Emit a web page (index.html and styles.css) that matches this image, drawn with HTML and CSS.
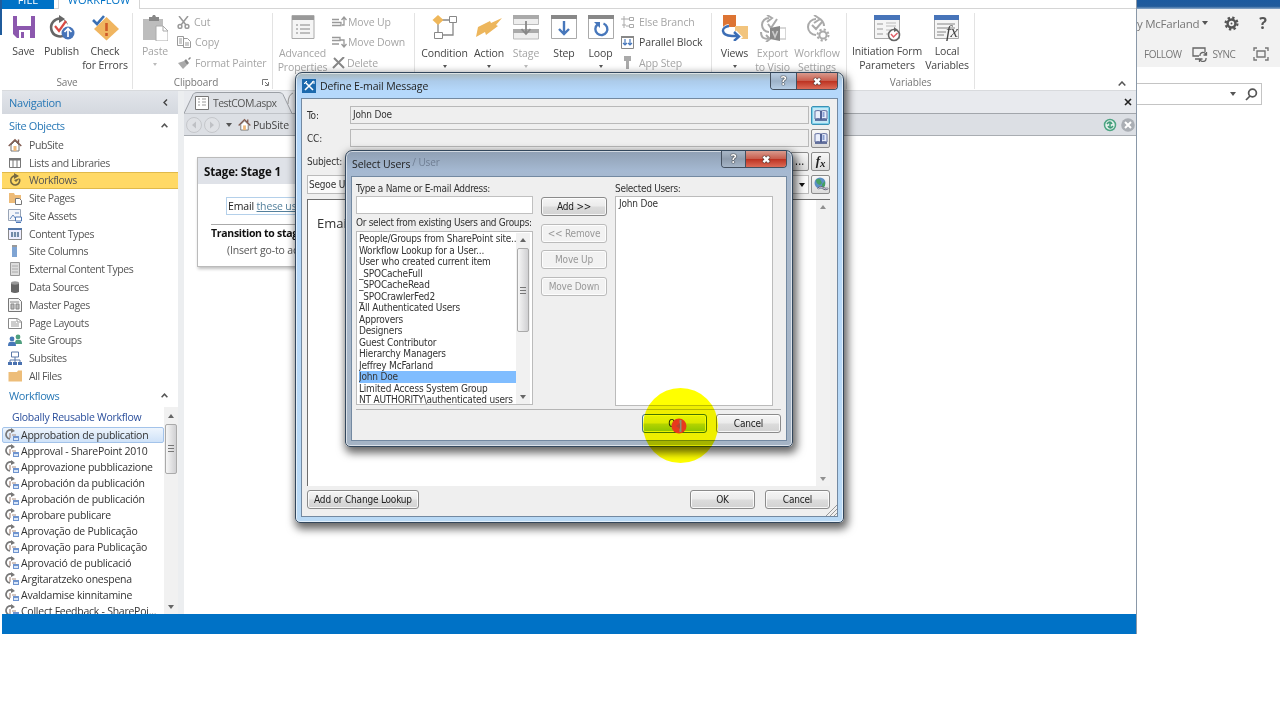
FILE: index.html
```html
<!DOCTYPE html>
<html lang="en">
<head>
    <meta charset="UTF-8">
    <meta name="viewport" content="width=device-width, initial-scale=1.0">
    <title>SharePoint Designer</title>
    <link rel="stylesheet" href="styles.css">
</head>
<body>
    <svg class="defs" width="0" height="0">
        <symbol id="flow" viewBox="0 0 15 14">
            <path d="M8 2.5A4.6 4.6 0 1 0 5 11" fill="none" stroke="#777" stroke-width="1.7"/>
            <path d="M6 0l4 3-4 2" fill="#777"/>
            <path d="M5 5v5M7 7h4" stroke="#a98d80" stroke-width="1.2"/>
            <path d="M8 8h6v5H8z" fill="#6f94cf"/><path d="M9 10h4v2H9z" fill="#dce8f8"/>
        </symbol>
        <symbol id="house" viewBox="0 0 14 14">
            <path d="M3 7v6h8V7L7 3z" fill="#fff" stroke="#777"/>
            <path d="M.7 8L7 1.7 13.3 8M10.5 1.5v3" fill="none" stroke="#805b50" stroke-width="1.4"/>
            <path d="M5.5 8h3v5h-3z" fill="#edb97d"/>
        </symbol>
        <symbol id="book" viewBox="0 0 14 12">
            <path d="M1 2q3-1 6 0v8q-3-1-6 0zM13 2q-3-1-6 0v8q3-1 6 0z" fill="#e9eefb" stroke="#6673a3"/>
            <path d="M1 11h12M7 2v8" stroke="#3e4f86" stroke-width="1.4"/>
            <path d="M9.5 3v5" stroke="#8ba1d4" stroke-width="2"/>
        </symbol>
    </svg>

    <div class="browser">
        <div class="browser-top"></div>
        <div class="browser-user">
            <span>y McFarland</span><i class="tri"></i>
            <svg class="gear" width="15" height="15" viewBox="0 0 16 16"><circle cx="8" cy="8" r="4.2" fill="none" stroke="#555" stroke-width="2.6"/><circle cx="8" cy="8" r="6.3" fill="none" stroke="#555" stroke-width="2.4" stroke-dasharray="2.5 2.45"/><circle cx="8" cy="8" r="1" fill="#555"/></svg>
            <b class="help">?</b>
        </div>
        <div class="browser-actions">
            <span>FOLLOW</span>
            <svg class="sync" width="16" height="15" viewBox="0 0 16 15" fill="none" stroke="#666" stroke-width="1.3"><path d="M7 9H1V1h12v4M3 12h4"/><path d="M8 9a3 3 0 0 1 6-1M14 11a3 3 0 0 1-6 1M14.5 5v3h-3M7.500 15v-3h3"/></svg>
            <span>SYNC</span>
            <svg class="focus" width="16" height="14" viewBox="0 0 16 14" fill="none" stroke="#777" stroke-width="1.4"><path d="M4 4h8v6H4zM1 4V1h3M12 1h3v3M15 10v3h-3M4 13H1v-3"/></svg>
        </div>
        <div class="browser-search">
            <i class="tri"></i>
            <svg width="13" height="13" viewBox="0 0 13 13" fill="none" stroke="#555" stroke-width="1.7"><circle cx="7.500" cy="5" r="3.900"/><path d="M5 8l-4 4"/></svg>
        </div>
    </div>

    <div class="app">
        <div class="tabs">
            <div class="tab-file">FILE</div>
            <div class="tab-workflow">WORKFLOW</div>
        </div>

        <div class="ribbon">
            <div class="group g-save">
                <div class="tools">
                    <div class="big"><svg width="24" height="24" viewBox="0 0 24 24"><path d="M1 1h22v22H5l-4-4z" fill="#8c58ae"/><path d="M5 1h14v10H5zM7 15h11v8H7z" fill="#fff"/><path d="M9 17h3v6H9z" fill="#8c58ae"/></svg><span>Save</span></div>
                    <div class="big"><svg width="28" height="26" viewBox="0 0 28 26"><path d="M13 3.500A9 9 0 1 0 17 20" fill="none" stroke="#666" stroke-width="2.600"/><path d="M11 0l6 4-6 4zM15 4a9 9 0 0 1 5 6" fill="#666"/><path d="M7 11l4 5 7-10" fill="none" stroke="#d94b45" stroke-width="2.200"/><circle cx="20" cy="18" r="6.500" fill="#4674b9"/><path d="M20 22v-8M16.500 17l3.500-3.500 3.500 3.500" stroke="#fff" stroke-width="1.700" fill="none"/></svg><span>Publish</span></div>
                    <div class="big"><svg width="28" height="26" viewBox="0 0 28 26"><path d="M15.500 2L28 14 15.500 25.500 3 14z" fill="#f0b560"/><path d="M15.500 8v8M15.500 18v3" stroke="#cf5a28" stroke-width="2.600"/><path d="M2 5l4 4 7-8" fill="none" stroke="#3a70b5" stroke-width="2.600"/></svg><span>Check<br>for Errors</span></div>
                </div>
                <div class="caption">Save</div>
            </div>

            <div class="group g-clip">
                <div class="tools">
                    <div class="big off"><svg width="26" height="26" viewBox="0 0 26 26"><path d="M1 4h20v21H1z" fill="#bdbdbd"/><path d="M7 2h3l1-2h2l1 2h3v4H7z" fill="#888"/><path d="M14 11h7l5 5v10H14z" fill="#fff" stroke="#aaa"/><path d="M21 11v5h5" fill="none" stroke="#aaa"/></svg><span>Paste</span><i class="tri"></i></div>
                    <div class="list off">
                        <div><svg width="13" height="13" viewBox="0 0 13 13" fill="none" stroke="#999" stroke-width="1.500"><path d="M2 0l7 9M11 0L4 9"/><circle cx="3" cy="10.500" r="1.900"/><circle cx="10" cy="10.500" r="1.900"/></svg><span>Cut</span></div>
                        <div><svg width="14" height="12" viewBox="0 0 14 12" fill="#fff" stroke="#999"><path d="M.5.5h6v9h-6zM6.500 2.500h4l3 3v6h-7z"/><path d="M2 3h3M2 5h3M2 7h3M8 7h4M8 9h4"/></svg><span>Copy</span></div>
                        <div><svg width="14" height="12" viewBox="0 0 14 12"><path d="M1 6l6-2 3 4-4 4z" fill="#aaa"/><path d="M7 4l2-2 3 4-2 2zM11 2l2-2 1 1-2 2z" fill="#888"/></svg><span>Format Painter</span></div>
                    </div>
                </div>
                <div class="caption">Clipboard<svg class="launcher" width="7" height="7" viewBox="0 0 7 7" stroke="#777" fill="none"><path d="M.5 6V.5H6M3 3l3 3M6.500 3v3.500H3"/></svg></div>
            </div>

            <div class="group g-modify">
                <div class="tools">
                    <div class="big off"><svg width="24" height="24" viewBox="0 0 24 24"><path d="M1 .5h22v23H1z" fill="#f5f5f5" stroke="#aaa"/><path d="M1 1h22v4H1z" fill="#999"/><path d="M5 10h2M5 14h2M5 18h2M9 10h10M9 14h10M9 18h10" stroke="#aaa" stroke-width="1.400"/></svg><span>Advanced<br>Properties</span></div>
                    <div class="list off">
                        <div><svg width="15" height="12" viewBox="0 0 15 12" fill="none" stroke="#999"><path d="M0 3.500h7M0 6.500h9v3H0M10 9h2V2M9.500 4L12 1l2.500 3" stroke-width="1.300"/></svg><span>Move Up</span></div>
                        <div><svg width="15" height="12" viewBox="0 0 15 12" fill="none" stroke="#999"><path d="M0 1.500h8v3H0M0 8h7M8 4h4v6M9.500 8l2.500 3 2.500-3" stroke-width="1.300"/></svg><span>Move Down</span></div>
                        <div><svg width="14" height="12" viewBox="0 0 14 12"><path d="M2 1l10 10M12 0L1 11" stroke="#888" stroke-width="2"/></svg><span>Delete</span></div>
                    </div>
                </div>
            </div>

            <div class="group g-insert">
                <div class="tools">
                    <div class="big"><svg width="26" height="26" viewBox="0 0 26 26" fill="none" stroke="#888"><path d="M10 5h7M6 9v9M10 20h11V8" stroke-width="1.300"/><path d="M6 0l5.500 5L6 10 .5 5z" fill="#efb75a" stroke="none"/><path d="M17.500 1.500h7v6h-7zM2.500 17.500h8v6h-8z" fill="#fff"/></svg><span>Condition</span><i class="tri"></i></div>
                    <div class="big"><svg width="26" height="24" viewBox="0 0 26 24"><path d="M26 3L15 8 14 6 2 12 0 22l9-5 1 3 12-9-2-1z" fill="#edb65c"/></svg><span>Action</span><i class="tri"></i></div>
                    <div class="big off"><svg width="26" height="25" viewBox="0 0 26 25"><path d="M.5.500h25v9H.5zM.5 15h25v9H.5z" fill="#eee" stroke="#bbb"/><path d="M0 0h26v4H0zM0 14h26v4H0z" fill="#aaa"/><path d="M13 6v13M8.500 14l4.500 5 4.500-5" fill="none" stroke="#888" stroke-width="1.800"/></svg><span>Stage</span><i class="tri"></i></div>
                    <div class="big"><svg width="26" height="25" viewBox="0 0 26 25"><path d="M.5.500h25v23H.5z" fill="#fff" stroke="#aaa"/><path d="M0 0h26v4H0z" fill="#888"/><path d="M13 6v13M8 14l5 5 5-5" fill="none" stroke="#4777bb" stroke-width="2.400"/></svg><span>Step</span></div>
                    <div class="big"><svg width="26" height="25" viewBox="0 0 26 25"><path d="M.5.500h25v23H.5z" fill="#fff" stroke="#aaa"/><path d="M0 0h26v4H0z" fill="#888"/><path d="M15.500 8.500a6 6 0 1 1-6 1" fill="none" stroke="#4777bb" stroke-width="2.400"/><path d="M6 7h6v6z" fill="#4777bb"/></svg><span>Loop</span><i class="tri"></i></div>
                    <div class="list">
                        <div class="off"><svg width="13" height="13" viewBox="0 0 13 13" fill="none" stroke="#aaa"><path d="M3 0v12M0 3h6M1 9h4M8.500 1.500h4v3h-4zM8.500 8.500h4v3h-4zM6 3h2M5 10h3"/></svg><span>Else Branch</span></div>
                        <div><svg width="13" height="13" viewBox="0 0 13 13" fill="none"><path d="M.5.500h12v12H.5z" fill="#fff" stroke="#888"/><path d="M0 0h13v2H0z" fill="#888"/><path d="M4 3v6M2 7l2 2 2-2M9 3v6M7 7l2 2 2-2" stroke="#4777bb" stroke-width="1.200"/></svg><span>Parallel Block</span></div>
                        <div class="off"><svg width="13" height="13" viewBox="0 0 13 13"><path d="M3 0h7v5H8v8H5V5H3z" fill="#aaa"/></svg><span>App Step</span></div>
                    </div>
                </div>
            </div>

            <div class="group g-manage">
                <div class="tools">
                    <div class="big"><svg width="27" height="26" viewBox="0 0 27 26"><path d="M2 0h13v12H2z" fill="#dd7433"/><path d="M14 11h13v13H14z" fill="#f2c47d"/><path d="M8 11c-7 1-9 10 3 11h6M14 17l5 5-5 4" fill="none" stroke="#fff" stroke-width="4"/><path d="M8 11c-8 1-9 9 3 10h6M13 17l5 4.500-5 4.500" fill="none" stroke="#3c6eb5" stroke-width="2.400"/></svg><span>Views</span><i class="tri"></i></div>
                    <div class="big off"><svg width="27" height="27" viewBox="0 0 27 27"><path d="M10 3a7 7 0 0 0 0 14M8 0l5 3-5 4M2 17c0 6 3 7 8 7M7 20l4 4-4 3M9 9l3 4 6-9" fill="none" stroke="#aaa" stroke-width="2"/><path d="M11 13l10-2v15l-10-2z" fill="#888"/><path d="M21 13h6v11h-6M13.500 16l2.500 6 2.500-6" stroke="#ccc" fill="none" stroke-width="1.600"/></svg><span>Export<br>to Visio</span></div>
                    <div class="big off"><svg width="27" height="27" viewBox="0 0 27 27" fill="none" stroke="#aaa" stroke-width="2"><path d="M12 4A8 8 0 1 0 12 20M10 0l6 4-6 4M16 4c3 2 4 4 4 7M8 10l4 4 6-7"/><circle cx="19" cy="20" r="3.600"/><circle cx="19" cy="20" r="5.500" stroke-dasharray="2.200 2.120"/></svg><span>Workflow<br>Settings</span></div>
                </div>
            </div>

            <div class="group g-vars">
                <div class="tools">
                    <div class="big"><svg width="27" height="27" viewBox="0 0 27 27"><path d="M.5.500h25v23H.5z" fill="#f5f5f5" stroke="#aaa"/><path d="M0 0h26v5H0z" fill="#4774b9"/><path d="M3 9h6M3 14h6M3 19h6" stroke="#999"/><path d="M12 8h10M12 11h10M12 15h8M12 19h3" stroke="#bbb"/><circle cx="20" cy="20" r="5.500" fill="#fff" stroke="#666" stroke-width="1.600"/><path d="M20 12l4 3-4 2" fill="#666"/><path d="M17 19l2.500 3 4-4" fill="none" stroke="#e2626b" stroke-width="1.500"/></svg><span>Initiation Form<br>Parameters</span></div>
                    <div class="big"><svg width="26" height="27" viewBox="0 0 26 27"><path d="M.5.500h24v23H.5z" fill="#f5f5f5" stroke="#aaa"/><path d="M0 0h25v5H0z" fill="#4774b9"/><path d="M3 9h18M3 13h18M3 17h9M3 20h7" stroke="#aaa" stroke-width="1.300"/><text x="12" y="22" class="fx-text">fx</text></svg><span>Local<br>Variables</span></div>
                </div>
                <div class="caption">Variables</div>
            </div>
            <svg class="collapse" width="8" height="5" viewBox="0 0 8 5"><path d="M.7 4.500L4 1l3.300 3.500" fill="none" stroke="#555" stroke-width="1.500"/></svg>
        </div>

        <div class="main">
            <div class="nav">
                <div class="nav-title"><span>Navigation</span><svg width="5" height="7" viewBox="0 0 5 7"><path d="M4 .5l-3 3 3 3" fill="none" stroke="#444" stroke-width="1.400"/></svg></div>
                <div class="nav-head"><span>Site Objects</span><svg width="7" height="5" viewBox="0 0 8 5"><path d="M.7 4.500L4 1l3.300 3.500" fill="none" stroke="#555" stroke-width="1.700"/></svg></div>
                <ul class="objects">
                    <li><svg><use href="#house"/></svg>PubSite</li>
                    <li><svg viewBox="0 0 14 14"><path d="M1.500 2.500h11v9h-11zM5 3v8M9 3v8" fill="#fff" stroke="#777"/><path d="M1 2h12v2.500H1z" fill="#777"/></svg>Lists and Libraries</li>
                    <li class="current"><svg viewBox="0 0 14 14"><path d="M8 3a4.500 4.500 0 1 0 3.500 3" fill="none" stroke="#776a43" stroke-width="1.600"/><path d="M6 0l5 3-5 3zM6 7l2 2 4-4" fill="#776a43"/></svg>Workflows</li>
                    <li><svg viewBox="0 0 14 14"><path d="M1 2h5l1 2h6v8H1z" fill="#edbb78"/><path d="M7.500 7.500h4l2 2v4h-6z" fill="#fff" stroke="#777"/></svg>Site Pages</li>
                    <li><svg viewBox="0 0 14 14"><path d="M.5.500h12v11H.5z" fill="#f4f6fa" stroke="#98a4b6"/><path d="M2 10l3-4 3 4M7 4h4" stroke="#6789bd" fill="none"/><path d="M7.500 8h6v4h-6zM8 13.500h5" fill="#fff" stroke="#4d77b5"/></svg>Site Assets</li>
                    <li><svg viewBox="0 0 14 14"><path d="M.5 1.500h13v11H.5z" fill="#eef" stroke="#888"/><path d="M0 1h14v2H0z" fill="#5276a8"/><path d="M3 5h8v5H3z" fill="#738aa9"/><path d="M5.500 5v5M8.500 5v5" stroke="#dce4ef"/></svg>Content Types</li>
                    <li><svg viewBox="0 0 14 14"><path d="M4 1h5v12H4z" fill="#7fa4d3"/><path d="M4 1h5v2H4z" fill="#999"/></svg>Site Columns</li>
                    <li><svg viewBox="0 0 14 14"><path d="M2.500.500h9v13h-9z" fill="#ddd" stroke="#999"/><path d="M4 4h6M4 7h6M4 10h6" stroke="#aaa"/></svg>External Content Types</li>
                    <li><svg viewBox="0 0 14 14"><path d="M3 3h8v9q-4 2-8 0z" fill="#666"/><ellipse cx="7" cy="3" rx="4" ry="1.700" fill="#999"/></svg>Data Sources</li>
                    <li><svg viewBox="0 0 14 14"><path d="M.5.500h10l3 3v10H.5z" fill="#f4f4f4" stroke="#777"/><path d="M2 4h9M3 6h3v5H3zM8 6h3v5H8z" fill="#bbb" stroke="#888"/></svg>Master Pages</li>
                    <li><svg viewBox="0 0 14 14"><path d="M.5 2.500h9l4 3v7H.5z" fill="#fff" stroke="#888"/><path d="M9 3v3h4M3 6h5M3 8h8M3 10h8" fill="none" stroke="#999"/></svg>Page Layouts</li>
                    <li><svg viewBox="0 0 14 14"><circle cx="10" cy="4" r="2.400" fill="#4f9f7e"/><path d="M7 11q0-5 3-4 4-1 4 4z" fill="#4f9f7e"/><circle cx="4" cy="6" r="2.400" fill="#4777b8"/><path d="M0 13q0-5 4-4 4-1 4 4z" fill="#4777b8"/></svg>Site Groups</li>
                    <li><svg viewBox="0 0 14 14"><path d="M3.500 1h7v5h-7zM7 6v3M2 12V9h10v3M7 9v3" fill="#fff" stroke="#5b79a8"/><path d="M0 11h4v3H0zM5 11h4v3H5zM10 11h4v3h-4z" fill="#4971b0"/></svg>Subsites</li>
                    <li><svg viewBox="0 0 14 14"><path d="M.5 3H9l1-1.500h4V12.500H.5z" fill="#edbd79"/></svg>All Files</li>
                </ul>
                <div class="nav-head"><span>Workflows</span><svg width="7" height="5" viewBox="0 0 8 5"><path d="M.7 4.500L4 1l3.300 3.500" fill="none" stroke="#555" stroke-width="1.700"/></svg></div>
                <div class="tree">
                    <ul>
                        <li class="tree-head">Globally Reusable Workflow</li>
                        <li class="picked"><svg><use href="#flow"/></svg>Approbation de publication</li>
                        <li><svg><use href="#flow"/></svg>Approval - SharePoint 2010</li>
                        <li><svg><use href="#flow"/></svg>Approvazione pubblicazione</li>
                        <li><svg><use href="#flow"/></svg>Aprobación da publicación</li>
                        <li><svg><use href="#flow"/></svg>Aprobación de publicación</li>
                        <li><svg><use href="#flow"/></svg>Aprobare publicare</li>
                        <li><svg><use href="#flow"/></svg>Aprovação de Publicação</li>
                        <li><svg><use href="#flow"/></svg>Aprovação para Publicação</li>
                        <li><svg><use href="#flow"/></svg>Aprovació de publicació</li>
                        <li><svg><use href="#flow"/></svg>Argitaratzeko onespena</li>
                        <li><svg><use href="#flow"/></svg>Avaldamise kinnitamine</li>
                        <li><svg><use href="#flow"/></svg>Collect Feedback - SharePoi...</li>
                    </ul>
                    <div class="scroll tree-scroll"><i class="up"></i><div class="thumb"></div><i class="down"></i></div>
                </div>
            </div>

            <div class="content">
                <div class="doc-tabs">
                    <svg class="tab-shape" width="112" height="22" viewBox="0 0 112 22"><path d="M0 21.500L9 2.500Q10 .5 13 .5H95Q98 .5 99 2.500L108 21.500" fill="#dde0e5" stroke="#9b9fa5"/><path d="M104 12q0-9 5-11" fill="none" stroke="#999"/></svg>
                    <div class="doc-tab"><svg width="14" height="14" viewBox="0 0 14 14"><path d="M.5.500h13v13H.5z" fill="#fff" stroke="#777"/><path d="M3 3h2M7 3h4M3 6h2M7 6h4M3 9h2M7 9h4" stroke="#999"/></svg><span>TestCOM.aspx</span></div>
                    <svg class="doc-close" width="8" height="8" viewBox="0 0 8 8"><path d="M1 1l6 6M7 1L1 7" stroke="#222" stroke-width="1.600"/></svg>
                </div>
                <div class="crumbs">
                    <svg width="36" height="18" viewBox="0 0 36 18"><circle cx="9" cy="9" r="7.500" fill="#dfe1e5" stroke="#c5c7cb"/><circle cx="27" cy="9" r="7.500" fill="#dfe1e5" stroke="#c5c7cb"/><path d="M11 5.500L7 9l4 3.500zM25 5.500L29 9l-4 3.500z" fill="#bfc1c5"/></svg>
                    <i class="tri"></i>
                    <svg class="crumb-house" width="13" height="13"><use href="#house"/></svg>
                    <span>PubSite</span>
                    <svg class="crumb-tools" width="32" height="14" viewBox="0 0 32 14"><circle cx="7" cy="7" r="5.500" fill="#e4f0eb" stroke="#4da583" stroke-width="1.500"/><path d="M4 6q3-4 5 0M10 8q-3 4-5 0M7 4v6" stroke="#3e9b77" stroke-width="1.500" fill="none"/><circle cx="25" cy="7" r="6.800" fill="#aaaeb4"/><path d="M22 4l6 6M28 4l-6 6" stroke="#fff" stroke-width="2"/></svg>
                </div>
                <div class="canvas">
                    <div class="stage">
                        <div class="stage-head">Stage: Stage 1</div>
                        <div class="stage-body">
                            <div class="step">Email <u>these users</u></div>
                            <div class="transition">Transition to stage</div>
                            <div class="insert">(Insert go-to actions)</div>
                        </div>
                    </div>
                </div>
            </div>
        </div>
        <div class="status"></div>
    </div>

    <div class="dialog email-dialog">
        <div class="titlebar">
            <svg width="14" height="14" viewBox="0 0 14 14"><path d="M0 0h14v14H0z" fill="#1c69ad"/><path d="M3 3l8 8M11 3l-8 8" stroke="#fff" stroke-width="1.600"/><path d="M2 5l3-3M10 3l2-1v3" stroke="#fff" fill="none"/></svg>
            <span>Define E-mail Message</span>
            <div class="win-buttons"><div class="win-help">?</div><div class="win-close">✖</div></div>
        </div>
        <div class="client">
            <div class="field"><label>To:</label><div class="box">John Doe</div><div class="icon-btn hot"><svg width="14" height="12"><use href="#book"/></svg></div></div>
            <div class="field"><label>CC:</label><div class="box"></div><div class="icon-btn"><svg width="14" height="12"><use href="#book"/></svg></div></div>
            <div class="field"><label>Subject:</label><div class="box"></div><div class="icon-btn dots">...</div><div class="icon-btn fx">f<small>x</small></div></div>
            <div class="format">
                <div class="font-box">Segoe UI</div>
                <i class="tri"></i>
                <div class="icon-btn"><svg width="16" height="15" viewBox="0 0 16 15"><circle cx="7" cy="6" r="5.500" fill="#5b8fc4"/><path d="M3 3q4-3 5 1 2 2-1 4-4-1-4-5zM9 7l3-3v5l-3 2z" fill="#45a064"/><path d="M5 12q2-3 5-1t5 0" fill="none" stroke="#667" stroke-width="2.200"/><path d="M5 12q2-3 5-1t5 0" fill="none" stroke="#dde" stroke-width=".8"/></svg></div>
            </div>
            <div class="editor"><p>Email</p><div class="scroll faint"><i class="up"></i><i class="down"></i></div></div>
            <div class="buttons">
                <div class="btn lookup">Add or Change Lookup</div>
                <div class="btn">OK</div>
                <div class="btn">Cancel</div>
            </div>
            <svg class="grip" width="12" height="12" viewBox="0 0 12 12"><path d="M1 12L12 1M5 12l7-7M9 12l3-3" stroke="#999"/></svg>
        </div>
    </div>

    <div class="dialog users-dialog">
        <div class="titlebar">
            <span>Select Users</span><span class="behind">/ User</span>
            <div class="win-buttons"><div class="win-help">?</div><div class="win-close">✖</div></div>
        </div>
        <div class="client">
            <div class="pick">
                <div class="pick-left">
                    <div class="label">Type a Name or E-mail Address:</div>
                    <div class="name-input"></div>
                    <div class="label second">Or select from existing Users and Groups:</div>
                    <div class="listbox">
                        <ul>
                            <li>People/Groups from SharePoint site...</li>
                            <li>Workflow Lookup for a User...</li>
                            <li>User who created current item</li>
                            <li>_SPOCacheFull</li>
                            <li>_SPOCacheRead</li>
                            <li>_SPOCrawlerFed2</li>
                            <li>All Authenticated Users</li>
                            <li>Approvers</li>
                            <li>Designers</li>
                            <li>Guest Contributor</li>
                            <li>Hierarchy Managers</li>
                            <li>Jeffrey McFarland</li>
                            <li class="chosen">John Doe</li>
                            <li>Limited Access System Group</li>
                            <li>NT AUTHORITY\authenticated users</li>
                        </ul>
                        <div class="scroll list-scroll"><i class="up"></i><div class="thumb"></div><i class="down"></i></div>
                    </div>
                </div>
                <div class="pick-mid">
                    <div class="btn">Add &gt;&gt;</div>
                    <div class="btn disabled">&lt;&lt; Remove</div>
                    <div class="btn disabled">Move Up</div>
                    <div class="btn disabled">Move Down</div>
                </div>
                <div class="pick-right">
                    <div class="label">Selected Users:</div>
                    <div class="selected">John Doe</div>
                </div>
            </div>
            <div class="buttons">
                <div class="btn default">OK</div>
                <div class="btn">Cancel</div>
            </div>
        </div>
    </div>

    <div class="click-halo"></div>
    <svg class="click-dot" width="16" height="16" viewBox="0 0 16 16"><circle cx="8" cy="8" r="7.500" fill="#e8391c"/><path d="M9.500 2v12" stroke="#8f8d75" stroke-width="2"/><path d="M5 8l4-3v6z" fill="#b8442e"/></svg>
</body>
</html>
```
FILE: styles.css
```css
* {
    margin: 0;
    padding: 0;
    box-sizing: border-box;
}
body {
    position: relative;
    width: 1280px;
    height: 720px;
    overflow: hidden;
    background: #fff;
    font-family: "Open Sans", "Noto Sans", sans-serif;
    font-size: 10.5px;
    color: #555;
}
ul {
    list-style: none;
}
svg {
    display: block;
    flex: none;
}
.defs {
    position: absolute;
}
.tri {
    width: 0;
    height: 0;
    border: 3px solid transparent;
    border-top: 4px solid #555;
    border-bottom: none;
}

/* page behind the editor */
.browser {
    height: 720px;
    padding-left: 1137px;
    background: linear-gradient(90deg, #1f5b9c 2px, transparent 2px) 0 0 / 100% 35px no-repeat;
}
.browser-top {
    height: 9px;
    background: linear-gradient(#1c5a9f, #215b9b 70%, #8da9c8);
}
.browser-user {
    display: flex;
    align-items: center;
    height: 28px;
    background: #f2f2f2;
    font-size: 11.5px;
    letter-spacing: -0.25px;
    color: #777;
}
.browser-user .tri {
    margin-left: 3px;
}
.gear {
    margin-left: 16px;
}
.help {
    margin-left: 20px;
    font-size: 16px;
    color: #555;
}
.browser-actions {
    display: flex;
    align-items: center;
    height: 30px;
    padding: 4px 0 0 7px;
    background: #f2f2f2;
    font-size: 10px;
    letter-spacing: -0.5px;
    color: #777;
}
.sync {
    margin: 0 4px 0 11px;
}
.focus {
    margin-left: 18px;
}
.browser-search {
    display: flex;
    align-items: center;
    width: 125px;
    height: 22px;
    margin-top: 16px;
    padding-left: 93px;
    gap: 9px;
    border: 1px solid #c4c4c4;
    border-left: none;
}

/* designer window */
.app {
    position: absolute;
    left: 2px;
    top: 0;
    width: 1135px;
    height: 634px;
    display: flex;
    flex-direction: column;
    background: #fff;
    border-right: 1px solid #8a98a8;
}
.tabs {
    display: flex;
    height: 9px;
    border-bottom: 1px solid #d5d5d5;
    font-size: 11px;
}
.tabs div {
    height: 9px;
    overflow: hidden;
}
.tab-file {
    width: 52px;
    margin-right: 4px;
    background: #0072c6;
    color: #fff;
    text-align: center;
    line-height: 0;
}
.tab-workflow {
    width: 82px;
    background: #fff;
    border: solid #d5d5d5;
    border-width: 0 1px;
    color: #0072c6;
    text-align: center;
    line-height: 0;
}
.ribbon {
    display: flex;
    height: 82px;
    padding-top: 4px;
    border-bottom: 1px solid #d8dadd;
    letter-spacing: -0.12px;
}
.group {
    display: flex;
    flex-direction: column;
    border-right: 1px solid #e3e3e3;
    height: 76px;
}
.g-save { width: 131px; }
.g-clip { width: 140px; }
.g-modify { width: 142px; }
.g-insert { width: 297px; }
.g-manage { width: 135px; }
.g-vars { width: 128px; }
.tools {
    display: grid;
    height: 65px;
}
.g-save .tools { grid-template-columns: 43px 33px 54px; }
.g-clip .tools { grid-template-columns: 44px 1fr; }
.g-modify .tools { grid-template-columns: 59px 1fr; }
.g-insert .tools { grid-template-columns: 59px 30px 44px 32px 41px 1fr; }
.g-manage .tools { grid-template-columns: 45px 31px 58px; }
.g-vars .tools { grid-template-columns: 80px 40px; }
.big {
    display: flex;
    flex-direction: column;
    align-items: center;
    white-space: nowrap;
    text-align: center;
    line-height: 14px;
    padding-top: 2px;
    color: #444;
}
.big svg {
    margin-bottom: auto;
}
.big span {
    flex: none;
    height: 32px;
}
.big .tri {
    margin: -13px 0 10px;
    border-width: 3px 2.5px 0;
}
.off, .off span {
    color: #a5a5a5;
}
.off .tri {
    border-top-color: #bbb;
}
.list {
    white-space: nowrap;
    color: #444;
    margin-top: -1px;
}
.list div {
    display: flex;
    align-items: center;
    gap: 4px;
    height: 20.3px;
}
.g-modify .list div {
    gap: 1px;
}
.g-insert .list div {
    gap: 5px;
}
.caption {
    position: relative;
    text-align: center;
    line-height: 13px;
    color: #777;
    font-size: 10px;
}
.g-clip .caption {
    padding-right: 13px;
}
.launcher {
    position: absolute;
    right: 3px;
    top: 3px;
}
.fx-text {
    font: italic 17px "Liberation Serif", serif;
    fill: #444;
}
.collapse {
    align-self: flex-end;
    margin: 0 10px 4px auto;
}

.main {
    display: flex;
    flex: 1;
    min-height: 0;
}
.nav {
    display: flex;
    flex-direction: column;
    width: 182px;
    border-right: 6px solid #eceef0;
}
.nav-title, .nav-head {
    display: flex;
    align-items: center;
    justify-content: space-between;
    flex: none;
    padding: 0 10px 0 7px;
    color: #2878b6;
    font-size: 11px;
    letter-spacing: -0.4px;
}
.nav-title {
    height: 23px;
    letter-spacing: -0.25px;
    background: linear-gradient(#e2e5ea, #d4d8df);
}
.nav-head {
    height: 22px;
}
.objects {
    flex: none;
    letter-spacing: -0.4px;
}
.objects li {
    display: flex;
    align-items: center;
    gap: 7px;
    height: 17.77px;
    padding-left: 6px;
}
.objects svg {
    width: 14px;
    height: 14px;
}
.objects .current {
    background: #ffd966;
    border: solid #e0b94a;
    border-width: 1px 0;
}
.tree {
    display: flex;
    flex: 1;
    min-height: 0;
    letter-spacing: -0.25px;
}
.tree ul {
    width: 162px;
    overflow: hidden;
    white-space: nowrap;
}
.tree li {
    display: flex;
    align-items: center;
    height: 16px;
    padding-left: 3px;
    gap: 1px;
    color: #333;
}
.tree svg {
    width: 15px;
    height: 14px;
}
.tree .tree-head {
    height: 20px;
    padding-left: 10px;
    color: #2b4f9c;
}
.tree .picked {
    background: linear-gradient(#eef5fd, #cfe2f8);
    border: 1px solid #a3c3ea;
    border-radius: 2px;
    padding-left: 2px;
}

/* scrollbars */
.scroll {
    display: flex;
    flex-direction: column;
    align-items: center;
    flex: none;
    width: 14px;
    background: #f1f1f1;
}
.scroll .up, .scroll .down {
    border: 3px solid transparent;
    border-top: none;
    border-bottom: 4px solid #666;
    margin-top: 5px;
}
.scroll .down {
    border-bottom: none;
    border-top: 4px solid #666;
    margin: auto 0 5px;
}
.thumb {
    width: 12px;
    border: 1px solid #aaa;
    border-radius: 2px;
    background:
        repeating-linear-gradient(#777 0 1px, transparent 1px 3px) center / 6px 7px no-repeat,
        linear-gradient(90deg, #f6f6f6, #d0d0d2);
}
.tree-scroll .up {
    margin-top: 7px;
}
.tree-scroll .thumb {
    height: 50px;
    margin-top: 6px;
}
.list-scroll .thumb {
    height: 84px;
    margin-top: 6px;
}
.faint i {
    opacity: 0.7;
}

.content {
    flex: 1;
    min-width: 0;
}
.doc-tabs {
    display: flex;
    align-items: center;
    position: relative;
    height: 23px;
    background: #e8eaee;
    border-bottom: 1px solid #a2a6ab;
}
.tab-shape {
    position: absolute;
    left: 0;
    top: 1px;
}
.doc-tab {
    position: relative;
    display: flex;
    align-items: center;
    gap: 4px;
    padding: 1px 0 0 11px;
    letter-spacing: -0.55px;
    color: #555;
}
.doc-close {
    margin: 0 4px 0 auto;
}
.crumbs {
    display: flex;
    align-items: center;
    height: 22px;
    padding-left: 1px;
    background: #dcdfe4;
    border-bottom: 1px solid #a9adb2;
    letter-spacing: -0.2px;
    color: #444;
}
.crumbs .tri {
    margin: 0 6px 0 5px;
}
.crumb-house {
    margin-right: 2px;
}
.crumb-tools {
    margin: 0 1px 0 auto;
}
.canvas {
    padding: 21px 13px;
}
.stage {
    width: 200px;
    height: 110px;
    border: 1px solid #bbb;
    box-shadow: 1px 2px 3px rgba(0, 0, 0, 0.25);
    white-space: nowrap;
    overflow: hidden;
    letter-spacing: -0.15px;
}
.stage-head {
    height: 26px;
    padding-left: 6px;
    line-height: 28px;
    background: #dfe2e8;
    font-size: 11.5px;
    font-weight: bold;
    color: #111;
}
.stage-body {
    padding: 13px 0 0 13px;
}
.step {
    height: 18px;
    margin-left: 15px;
    padding-left: 1px;
    border: 1px solid #b4d0ea;
    line-height: 16px;
    color: #222;
}
.step u {
    color: #54809c;
}
.transition {
    margin-top: 9px;
    border-top: 1px solid #aaa;
    line-height: 17px;
    font-weight: bold;
    letter-spacing: -0.3px;
    color: #111;
}
.insert {
    padding-left: 16px;
    line-height: 16px;
}
.status {
    height: 20px;
    flex: none;
    background: #0072c6;
}

/* dialogs */
.dialog {
    position: absolute;
    display: flex;
    flex-direction: column;
    padding: 0 5px 5px;
    border: 1.5px solid #33475c;
    border-radius: 7px 7px 5px 5px;
    background: linear-gradient(#a9b7b8, #accbea 8px, #b5d8fb 18px, #b9d9f5);
    box-shadow: inset 0 0 0 1px rgba(255, 255, 255, 0.6), 2px 4px 9px 2px rgba(0, 0, 0, 0.6);
    font-family: "DejaVu Sans Condensed", "DejaVu Sans", sans-serif;
    font-size: 10px;
    letter-spacing: -0.2px;
    color: #333;
}
.email-dialog {
    left: 295px;
    top: 72px;
    width: 549px;
    height: 451px;
}
.users-dialog {
    left: 345px;
    top: 150px;
    width: 448px;
    height: 297px;
    background: linear-gradient(#8f9fb3, #a5b9d2 20px, #aab9cc 40px, #a5b4c5);
}
.titlebar {
    display: flex;
    align-items: center;
    flex: none;
    height: 25px;
    gap: 4px;
    padding-left: 1px;
    font-size: 10.5px;
    font-family: "Open Sans", sans-serif;
    letter-spacing: -0.1px;
    color: #222;
}
.behind {
    margin: -3px 0 0 -2px;
    color: #6f7e93;
    font-size: 10px;
}
.win-buttons {
    display: flex;
    align-self: flex-start;
    width: 68px;
    height: 17px;
    margin-left: auto;
    border: 1px solid #44505f;
    border-top: none;
    border-radius: 0 0 4px 4px;
    overflow: hidden;
    color: #fff;
    font-size: 12px;
    font-weight: bold;
    line-height: 16px;
    text-align: center;
    text-shadow: 0 0 1px #222, 0 0 1px #222, 0 0 1px #222;
}
.win-help {
    width: 26px;
    background: linear-gradient(#bccee1, #9db2c8 50%, #b6cde4);
    border-right: 1px solid #44505f;
}
.win-close {
    flex: 1;
    font-size: 10px;
    background: linear-gradient(#d99a8d, #c95e4e 48%, #bd3322 52%, #dc6b57);
}
.users-dialog .win-buttons {
    width: 66px;
}
.users-dialog .win-help {
    width: 24px;
    background: linear-gradient(#a9b7c7, #8e9cad 50%, #a5b4c6);
}
.client {
    position: relative;
    flex: 1;
    min-height: 0;
    display: flex;
    flex-direction: column;
    background: #efefef;
    border: 1px solid #7389a1;
}
.email-dialog .client {
    padding: 6.5px 7px 0 5px;
}
.field {
    display: flex;
    align-items: center;
    flex: none;
    height: 19px;
    margin-bottom: 4.2px;
}
.field label {
    width: 43px;
    flex: none;
}
.box {
    flex: 1;
    height: 18px;
    padding-left: 2px;
    border: 1px solid #b9b9b9;
    line-height: 15px;
}
.icon-btn {
    display: flex;
    align-items: center;
    justify-content: center;
    width: 19px;
    height: 19px;
    margin-left: 2px;
    flex: none;
    border: 1px solid #8b8b8b;
    border-radius: 2px;
    background: linear-gradient(#f7f7f7, #dcdcdc);
}
.hot {
    border-color: #3a91b5;
    background: #c5e8f6;
    box-shadow: inset 0 0 0 1px #7fd0ea;
}
.dots {
    font-size: 12px;
    color: #111;
}
.fx {
    font: italic bold 13px "Liberation Serif", serif;
    color: #222;
}
.fx small {
    padding-top: 3px;
}
.format {
    display: flex;
    align-items: center;
    flex: none;
    height: 19px;
    margin-bottom: 4.5px;
}
.format .tri {
    margin: 0 4px 0 -10px;
    border-top-color: #111;
}
.font-box {
    flex: 1;
    height: 19px;
    padding-left: 1px;
    border: 1px solid #bbb;
    background: #fafafa;
    line-height: 17px;
}
.editor {
    display: flex;
    flex: none;
    height: 287px;
    background: #fff;
    border: solid #6d6d6d;
    border-width: 1.5px 0 0 1.5px;
}
.editor p {
    flex: 1;
    padding: 14px 0 0 9px;
    font-family: "Open Sans", sans-serif;
    font-size: 13px;
    letter-spacing: 0;
}
.buttons {
    display: flex;
    gap: 10px;
}
.email-dialog .buttons {
    padding-top: 4px;
}
.btn {
    width: 65px;
    height: 19px;
    border: 1px solid #8b8b8b;
    border-radius: 3px;
    background: linear-gradient(#f5f5f5, #ebebeb 48%, #dcdcdc 52%, #d2d2d2);
    box-shadow: inset 0 0 0 1px rgba(255, 255, 255, 0.8);
    line-height: 17px;
    text-align: center;
    white-space: nowrap;
    color: #222;
}
.lookup {
    width: 112px;
    margin-right: auto;
}
.disabled {
    color: #999;
    background: #f2f2f2;
    border-color: #bbb;
}
.grip {
    position: absolute;
    right: 0;
    bottom: 0;
}
.users-dialog .client {
    padding: 0 5px 0 4px;
}
.pick {
    display: flex;
    height: 233px;
    border-bottom: 1px solid #b5b5b5;
}
.label {
    height: 19px;
    padding-top: 6px;
    line-height: 12px;
    white-space: nowrap;
    letter-spacing: -0.3px;
}
.pick-left {
    width: 177px;
}
.name-input {
    height: 18px;
    background: #fff;
    border: 1px solid #c0c0c0;
}
.label.second {
    height: 17px;
    padding-top: 3px;
}
.listbox {
    display: flex;
    height: 174px;
    padding: 1px 2px 0 2px;
    background: #fff;
    border: 1px solid #bbb;
}
.listbox ul {
    flex: 1;
    min-width: 0;
    overflow: hidden;
    white-space: nowrap;
}
.listbox li {
    height: 11.53px;
    line-height: 11.5px;
}
.listbox .chosen {
    background: #80bdff;
}
.pick-mid {
    display: flex;
    flex-direction: column;
    gap: 7.5px;
    width: 66px;
    margin: 20px 8px 0 8px;
}
.pick-mid .btn {
    width: 66px;
    height: 19px;
    flex: none;
}
.selected {
    width: 158px;
    height: 210px;
    padding: 1px 3px;
    background: #fff;
    border: 1px solid #bbb;
}
.users-dialog .buttons {
    justify-content: flex-end;
    gap: 9px;
    padding-top: 4px;
}
.default {
    border: 1.5px solid #45758d;
    background: linear-gradient(#e8f4e0, #dbe8d2 48%, #b4d4b0 52%, #8bc4a0);
}

/* mouse click highlight */
.click-halo {
    position: absolute;
    left: 643px;
    top: 388px;
    width: 75px;
    height: 75px;
    border-radius: 50%;
    background: #ff0;
    mix-blend-mode: multiply;
}
.click-dot {
    position: absolute;
    left: 671px;
    top: 418px;
}
```
